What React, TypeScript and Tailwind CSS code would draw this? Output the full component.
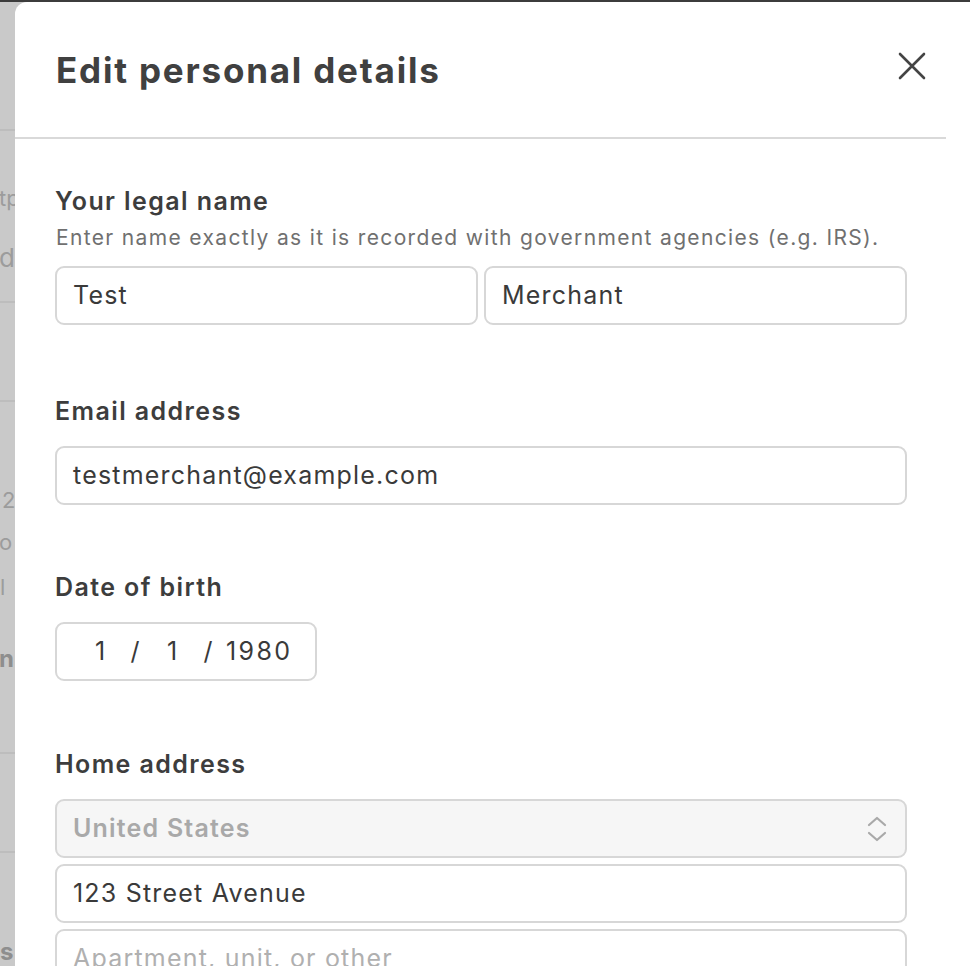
import React from "react";

const font = { fontFamily: "Inter, 'Noto Sans', Arial, sans-serif" };

function StripLine() {
  return <div className="h-[2px] bg-[#bdbdbd]" />;
}

function StripText({ text, h, shift, className }: { text: string; h: string; shift: string; className: string }) {
  return (
    <div className={`${h} flex items-center whitespace-nowrap ${shift} ${className}`}>{text}</div>
  );
}

function BackgroundStrip() {
  return (
    <div className="w-[15px] shrink-0 overflow-hidden flex flex-col text-[#9c9c9c]">
      <div className="h-[128px]" />
      <StripLine />
      <div className="h-[54px]" />
      <StripText text="tp" h="h-[28px]" shift="ml-[-1px]" className="text-[22px]" />
      <div className="h-[30px]" />
      <StripText text="d" h="h-[30px]" shift="ml-[-1px]" className="text-[26px]" />
      <div className="h-[29px]" />
      <StripLine />
      <div className="h-[97px]" />
      <StripLine />
      <div className="h-[85px]" />
      <StripText text="2" h="h-[28px]" shift="ml-[2px]" className="text-[22px]" />
      <div className="h-[14px]" />
      <StripText text="o" h="h-[28px]" shift="ml-[-1px]" className="text-[22px]" />
      <div className="h-[17px]" />
      <StripText text="l" h="h-[28px]" shift="ml-[0px]" className="text-[22px]" />
      <div className="h-[44px]" />
      <StripText text="n" h="h-[28px]" shift="ml-[-1px]" className="text-[24px] font-bold text-[#8e8e8e]" />
      <div className="h-[80px]" />
      <StripLine />
      <div className="h-[97px]" />
      <StripLine />
      <div className="h-[86px]" />
      <StripText text="s" h="h-[28px]" shift="ml-[0px]" className="text-[24px] font-bold text-[#8e8e8e]" />
    </div>
  );
}

function TextInput({ value, placeholder, className = "" }: { value?: string; placeholder?: string; className?: string }) {
  return (
    <div
      className={`h-[59px] rounded-[9px] border-2 border-[#d7d7d7] bg-white px-[16px] flex items-center text-[25px] tracking-[1.2px] whitespace-nowrap overflow-hidden ${
        value ? "text-[#3a3a3a]" : "text-[#b0b0b0]"
      } ${className}`}
    >
      {value ?? placeholder}
    </div>
  );
}

function Label({ children }: { children: React.ReactNode }) {
  return (
    <div className="text-[25px] leading-[32px] font-semibold text-[#3d3d3d] tracking-[1.4px]">{children}</div>
  );
}

export default function App() {
  return (
    <div style={font} className="h-[966px] w-full overflow-hidden bg-[#c9c9c9] border-t-2 border-[#3c3c3c] flex">
      <BackgroundStrip />
      <div className="flex-1 bg-white rounded-tl-[12px] overflow-hidden">
        {/* header */}
        <div className="h-[135px] w-[911px] flex items-center justify-between pl-[41px]">
          <h1 className="text-[35px] font-bold text-[#404040] tracking-[1.8px] mt-[2px]">Edit personal details</h1>
          <button className="w-[28px] h-[28px] mb-[8px] text-[#444]">
            <svg viewBox="0 0 28 28" width="28" height="28" fill="none" stroke="currentColor" strokeWidth="2.6" strokeLinecap="round">
              <path d="M2 2 L26 26 M26 2 L2 26" />
            </svg>
          </button>
        </div>
        <div className="w-[931px] h-[2px] bg-[#d9d9d9]" />

        <div className="ml-[40px] w-[852px] pt-[46px]">
          <Label>Your legal name</Label>
          <div className="mt-[7px] text-[21px] leading-[28px] text-[#707070] pl-[1px] tracking-[1.35px] whitespace-nowrap">
            Enter name exactly as it is recorded with government agencies (e.g. IRS).
          </div>
          <div className="mt-[14px] flex gap-[6px]">
            <TextInput value="Test" className="flex-1" />
            <TextInput value="Merchant" className="flex-1" />
          </div>

          <div className="mt-[70px]">
            <Label>Email address</Label>
          </div>
          <TextInput value="testmerchant@example.com" className="mt-[19px]" />

          <div className="mt-[66px]">
            <Label>Date of birth</Label>
          </div>
          <div className="mt-[19px] w-[262px] h-[59px] rounded-[9px] border-2 border-[#d7d7d7] flex items-center text-[25px] text-[#3a3a3a]">
            <span className="ml-[28px] w-[30px] text-center">1</span>
            <span className="ml-[10px] w-[20px] text-center">/</span>
            <span className="ml-[12px] w-[30px] text-center">1</span>
            <span className="ml-[11px] w-[20px] text-center">/</span>
            <span className="ml-[8px] tracking-[2.4px]">1980</span>
          </div>

          <div className="mt-[67px]">
            <Label>Home address</Label>
          </div>
          <div className="mt-[19px] flex flex-col gap-[6px]">
            <div className="h-[59px] rounded-[9px] border-2 border-[#d7d7d7] bg-[#f6f6f6] pl-[16px] pr-[18px] flex items-center justify-between">
              <span className="text-[25px] font-semibold text-[#a9a9a9] tracking-[1.2px]">United States</span>
              <svg viewBox="0 0 20 26" width="20" height="26" fill="none" stroke="#a9a9a9" strokeWidth="2.2" strokeLinecap="round" strokeLinejoin="round">
                <path d="M2 9 L10 2 L18 9" />
                <path d="M2 17 L10 24 L18 17" />
              </svg>
            </div>
            <TextInput value="123 Street Avenue" />
            <TextInput placeholder="Apartment, unit, or other" />
          </div>
        </div>
      </div>
    </div>
  );
}
